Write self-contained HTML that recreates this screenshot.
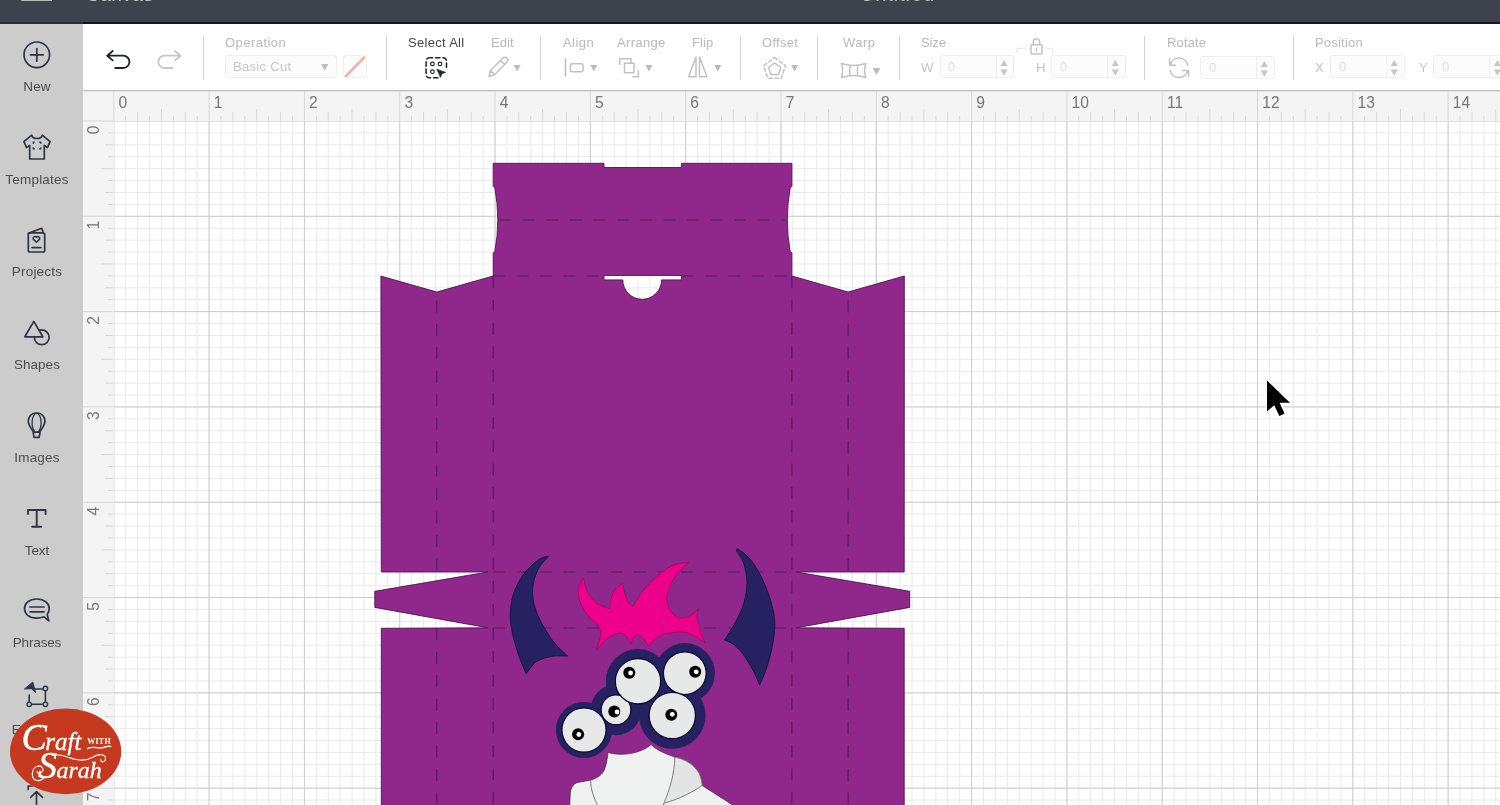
<!DOCTYPE html>
<html lang="en"><head><meta charset="utf-8"><title>Canvas</title>
<style>
html,body{margin:0;padding:0;}
body{width:1500px;height:805px;overflow:hidden;position:relative;background:#fff;font-family:"Liberation Sans",sans-serif;}
#topbar{position:absolute;left:0;top:0;width:1500px;height:23.6px;background:#3e424c;z-index:6;border-bottom:0;box-sizing:border-box;overflow:hidden;}
#topbar:after{content:"";position:absolute;left:0;right:0;bottom:0;height:1.4px;background:linear-gradient(90deg,#2b2e35 0,#2b2e35 83px,#16181c 83px);}
#topbar .ttl{position:absolute;color:#c8c8c8;font-size:19px;letter-spacing:.5px;top:-16.4px;line-height:22px;white-space:nowrap;}
#side{position:absolute;left:0;top:24px;width:83px;height:781px;background:#cccccc;overflow:hidden;}
.sb{position:absolute;left:0;width:74px;text-align:center;font-size:13.5px;color:#4c4c4c;letter-spacing:.2px;}
.sbi{position:absolute;}
#tool{position:absolute;left:83px;top:24px;width:1417px;height:66px;background:#fff;overflow:hidden;}
.lb{position:absolute;top:11px;font-size:13px;color:#b9b9b9;letter-spacing:.45px;white-space:nowrap;line-height:15px;}
.lb.on{color:#444;}
.sep{position:absolute;top:12px;width:1px;height:44px;background:#d3d3d3;}
.box{position:absolute;top:31.2px;height:23.2px;border:1px solid #efefef;border-radius:3px;box-sizing:border-box;background:#fcfcfc;}
.box .v{position:absolute;left:7.5px;top:3.2px;font-size:13px;color:#dfdfdf;line-height:15px;}
.box .sp{position:absolute;right:16.4px;top:0;bottom:0;width:1px;background:#efefef;}
.box .sp:before,.box .sp:after{content:"";position:absolute;left:4.4px;width:7.4px;height:6.2px;background:#c6c6c6;}
.box .sp:before{top:3.8px;clip-path:polygon(0 100%,100% 100%,50% 0);}
.box .sp:after{top:13.2px;clip-path:polygon(0 0,100% 0,50% 100%);}
.dim{position:absolute;top:35.6px;font-size:13.2px;color:#c4c4c4;line-height:15px;}
.dd{position:absolute;width:7.6px;height:7px;background:#bcbcbc;clip-path:polygon(0 0,100% 0,50% 100%);}
.lb,.sb,.dim,.box .v,.ttl{will-change:transform;}
#cv{position:absolute;left:0;top:0;z-index:5;pointer-events:none;will-change:transform;}
</style></head><body>

<svg id="cv" width="1500" height="805" viewBox="0 0 1500 805">
<defs>
<pattern id="gmin" x="113.3" y="120.5" width="11.91375" height="11.91375" patternUnits="userSpaceOnUse"><path d="M0.5 0V11.91375M0 0.5H11.91375" stroke="#e9e9e9" stroke-width="1" fill="none"/></pattern>
<pattern id="gmaj" x="113.3" y="120.5" width="95.31" height="95.31" patternUnits="userSpaceOnUse"><path d="M0.5 0V95.31M0 0.5H95.31" stroke="#cdcdcd" stroke-width="1" fill="none"/></pattern>
</defs>
<rect x="113.3" y="120.5" width="1386.7" height="684.5" fill="#fff"/>
<rect x="113.3" y="120.5" width="1386.7" height="684.5" fill="url(#gmin)"/>
<rect x="113.3" y="120.5" width="1386.7" height="684.5" fill="url(#gmaj)"/>
<rect x="83" y="90" width="1417" height="31" fill="#f4f4f4"/>
<rect x="83" y="90" width="30.8" height="715" fill="#f4f4f4"/>
<rect x="83" y="90" width="1417" height="1.3" fill="#bebebe"/>
<path d="M113.8 91V120.5M125.71 116V120.5M137.63 112V120.5M149.54 116V120.5M161.45 109V120.5M173.37 116V120.5M185.28 112V120.5M197.2 116V120.5M209.11 91V120.5M221.02 116V120.5M232.94 112V120.5M244.85 116V120.5M256.76 109V120.5M268.68 116V120.5M280.59 112V120.5M292.51 116V120.5M304.42 91V120.5M316.33 116V120.5M328.25 112V120.5M340.16 116V120.5M352.07 109V120.5M363.99 116V120.5M375.9 112V120.5M387.82 116V120.5M399.73 91V120.5M411.64 116V120.5M423.56 112V120.5M435.47 116V120.5M447.39 109V120.5M459.3 116V120.5M471.21 112V120.5M483.13 116V120.5M495.04 91V120.5M506.95 116V120.5M518.87 112V120.5M530.78 116V120.5M542.69 109V120.5M554.61 116V120.5M566.52 112V120.5M578.44 116V120.5M590.35 91V120.5M602.26 116V120.5M614.18 112V120.5M626.09 116V120.5M638 109V120.5M649.92 116V120.5M661.83 112V120.5M673.75 116V120.5M685.66 91V120.5M697.57 116V120.5M709.49 112V120.5M721.4 116V120.5M733.31 109V120.5M745.23 116V120.5M757.14 112V120.5M769.06 116V120.5M780.97 91V120.5M792.88 116V120.5M804.8 112V120.5M816.71 116V120.5M828.62 109V120.5M840.54 116V120.5M852.45 112V120.5M864.37 116V120.5M876.28 91V120.5M888.19 116V120.5M900.11 112V120.5M912.02 116V120.5M923.93 109V120.5M935.85 116V120.5M947.76 112V120.5M959.68 116V120.5M971.59 91V120.5M983.5 116V120.5M995.42 112V120.5M1007.33 116V120.5M1019.25 109V120.5M1031.16 116V120.5M1043.07 112V120.5M1054.99 116V120.5M1066.9 91V120.5M1078.81 116V120.5M1090.73 112V120.5M1102.64 116V120.5M1114.56 109V120.5M1126.47 116V120.5M1138.38 112V120.5M1150.3 116V120.5M1162.21 91V120.5M1174.12 116V120.5M1186.04 112V120.5M1197.95 116V120.5M1209.87 109V120.5M1221.78 116V120.5M1233.69 112V120.5M1245.61 116V120.5M1257.52 91V120.5M1269.43 116V120.5M1281.35 112V120.5M1293.26 116V120.5M1305.17 109V120.5M1317.09 116V120.5M1329 112V120.5M1340.92 116V120.5M1352.83 91V120.5M1364.74 116V120.5M1376.66 112V120.5M1388.57 116V120.5M1400.48 109V120.5M1412.4 116V120.5M1424.31 112V120.5M1436.23 116V120.5M1448.14 91V120.5M1460.05 116V120.5M1471.97 112V120.5M1483.88 116V120.5M1495.8 109V120.5M83 121H113.3M108 132.91H113.3M105 144.83H113.3M108 156.74H113.3M101 168.66H113.3M108 180.57H113.3M105 192.48H113.3M108 204.4H113.3M83 216.31H113.3M108 228.22H113.3M105 240.14H113.3M108 252.05H113.3M101 263.97H113.3M108 275.88H113.3M105 287.79H113.3M108 299.71H113.3M83 311.62H113.3M108 323.53H113.3M105 335.45H113.3M108 347.36H113.3M101 359.27H113.3M108 371.19H113.3M105 383.1H113.3M108 395.02H113.3M83 406.93H113.3M108 418.84H113.3M105 430.76H113.3M108 442.67H113.3M101 454.59H113.3M108 466.5H113.3M105 478.41H113.3M108 490.33H113.3M83 502.24H113.3M108 514.15H113.3M105 526.07H113.3M108 537.98H113.3M101 549.89H113.3M108 561.81H113.3M105 573.72H113.3M108 585.64H113.3M83 597.55H113.3M108 609.46H113.3M105 621.38H113.3M108 633.29H113.3M101 645.21H113.3M108 657.12H113.3M105 669.03H113.3M108 680.95H113.3M83 692.86H113.3M108 704.77H113.3M105 716.69H113.3M108 728.6H113.3M101 740.51H113.3M108 752.43H113.3M105 764.34H113.3M108 776.26H113.3M83 788.17H113.3M108 800.08H113.3" stroke="#d6d6d6" stroke-width="1" fill="none"/>
<g font-family="Liberation Sans, sans-serif" font-size="15.6" fill="#767676">
<text x="118.5" y="107.5">0</text>
<text x="213.81" y="107.5">1</text>
<text x="309.12" y="107.5">2</text>
<text x="404.43" y="107.5">3</text>
<text x="499.74" y="107.5">4</text>
<text x="595.05" y="107.5">5</text>
<text x="690.36" y="107.5">6</text>
<text x="785.67" y="107.5">7</text>
<text x="880.98" y="107.5">8</text>
<text x="976.29" y="107.5">9</text>
<text x="1071.6" y="107.5">10</text>
<text x="1166.91" y="107.5">11</text>
<text x="1262.22" y="107.5">12</text>
<text x="1357.53" y="107.5">13</text>
<text x="1452.84" y="107.5">14</text>
<text transform="translate(99.3 125.5) rotate(-90)" text-anchor="end">0</text>
<text transform="translate(99.3 220.81) rotate(-90)" text-anchor="end">1</text>
<text transform="translate(99.3 316.12) rotate(-90)" text-anchor="end">2</text>
<text transform="translate(99.3 411.43) rotate(-90)" text-anchor="end">3</text>
<text transform="translate(99.3 506.74) rotate(-90)" text-anchor="end">4</text>
<text transform="translate(99.3 602.05) rotate(-90)" text-anchor="end">5</text>
<text transform="translate(99.3 697.36) rotate(-90)" text-anchor="end">6</text>
<text transform="translate(99.3 792.67) rotate(-90)" text-anchor="end">7</text>
</g>
<path d="M493.2 163.3 V186.3 L494.9 187.8 Q500.6 220 494.9 251.4 L493.2 252.9 V276 L436.8 292 L380.9 276.1 L381.3 572 H488 L374.8 591.3 V607.4 L488 627.8 L381.3 628.3 V810 H904.2 V628.3 L796.2 627.8 L909.7 607.4 V591.3 L796.2 572 H904.2 L904.3 276 L848.1 292 L791.9 276 V252.9 L790.2 251.4 Q784.5 220 790.2 187.8 L791.9 186.3 V163.3 H681.4 V167.5 H604 V163.3 Z M604 275.4 H681.4 V279.9 H661.6 A19.4 19.4 0 0 1 622.8 279.9 H604 Z" fill="#90288c" fill-rule="evenodd" stroke="#4d1550" stroke-width="0.9" stroke-linejoin="miter"/>
<path d="M499.5 220H786 M493.2 276H604 M681.4 276H792 M493.2 572H792 M493.2 628H792 M493.2 276V810 M791.9 276V810" fill="none" stroke="#571a5c" stroke-width="1.2" stroke-dasharray="12 11.45"/>
<path d="M436.8 292V572 M848.1 292V572" fill="none" stroke="#571a5c" stroke-width="1.2" stroke-dasharray="12 11.45" stroke-dashoffset="15"/>
<path d="M436.8 628.3V810 M848.1 628.3V810" fill="none" stroke="#571a5c" stroke-width="1.2" stroke-dasharray="12 11.45" stroke-dashoffset="0"/>
<path d="M548.7 556.3 C546.8 558.6 541.7 562.8 539.1 567.6 C536.5 572.4 533.9 578.9 533.0 585.0 C532.2 591.1 532.5 597.8 533.9 604.1 C535.4 610.5 538.4 616.9 541.7 623.3 C545.1 629.6 549.6 636.9 553.9 642.4 C558.2 647.8 564.8 653.2 567.5 656.0 C564.4 656.0 557.3 655.4 552.2 656.3 C547.0 657.2 540.9 658.6 536.5 661.5 C532.2 664.4 528.2 671.3 526.1 673.7 C524.7 670.2 521.4 663.3 519.1 656.3 C516.8 649.3 513.6 639.5 512.2 632.0 C510.7 624.4 510.0 618.0 510.4 611.1 C510.9 604.1 512.2 596.9 514.8 590.2 C517.4 583.6 521.9 576.3 526.1 571.1 C530.3 565.9 536.2 561.4 540.0 558.9 C543.8 556.4 547.0 556.8 548.7 556.3 Z" fill="#262262" stroke="#15143f" stroke-width="1" stroke-linejoin="round"/>
<path d="M737.0 548.7 C739.3 550.4 744.7 553.0 748.6 557.3 C752.4 561.7 756.6 568.0 760.1 574.7 C763.7 581.4 767.3 590.1 769.8 597.8 C772.2 605.5 774.1 613.3 774.6 621.0 C775.1 628.7 773.9 636.4 772.7 644.1 C771.4 651.8 769.0 660.4 766.9 667.2 C764.7 674.0 761.2 681.4 759.7 685.0 C758.5 682.2 756.2 676.3 753.4 671.1 C750.5 665.9 746.1 658.2 742.8 653.7 C739.4 649.2 736.2 646.4 733.1 644.1 C730.1 641.8 726.2 640.7 724.5 639.9 C726.6 636.5 731.8 628.9 735.1 622.9 C738.3 616.9 741.7 610.4 743.7 603.6 C745.7 596.9 747.0 589.2 747.0 582.4 C747.0 575.7 745.4 568.3 743.7 563.1 C742.1 558.0 738.1 554.0 737.0 551.6 C735.9 549.2 737.0 549.3 737.0 548.7 Z" fill="#262262" stroke="#15143f" stroke-width="1" stroke-linejoin="round"/>
<path d="M583.0 578.0 C582.0 580.3 578.5 585.2 578.2 589.6 C577.9 594.1 579.1 600.1 580.9 604.6 C582.8 609.2 586.3 613.5 589.1 616.9 C592.0 620.4 596.1 622.2 598.0 625.1 C599.9 628.1 601.1 630.4 600.7 634.7 C600.4 639.0 596.9 647.6 596.0 650.8 C597.9 648.7 602.1 643.0 605.5 640.2 C608.9 637.4 613.3 634.9 616.4 634.0 C619.6 633.1 622.3 633.0 624.6 634.7 C627.0 636.4 629.6 642.3 630.8 644.3 C631.3 642.9 632.4 638.9 633.5 637.4 C634.7 636.0 636.1 635.4 637.6 635.4 C639.1 635.4 640.6 635.6 642.4 637.4 C644.2 639.3 647.3 644.5 648.6 646.3 C650.3 644.5 654.1 639.6 657.4 637.4 C660.7 635.3 664.3 634.2 668.4 633.3 C672.5 632.4 677.9 631.6 682.0 632.0 C686.1 632.3 689.1 633.6 693.0 635.4 C696.8 637.2 702.8 641.4 705.2 642.9 C704.2 640.2 701.1 633.3 699.8 629.2 C698.4 625.1 697.3 621.7 697.0 618.3 C696.8 614.9 698.1 610.7 698.4 608.7 C696.8 610.1 693.4 614.1 690.2 615.6 C687.0 617.1 682.5 618.3 679.3 617.6 C676.1 616.9 673.1 614.3 671.1 611.5 C669.0 608.6 667.4 604.2 667.0 600.5 C666.5 596.9 666.8 593.9 668.4 589.6 C670.0 585.3 673.1 579.1 676.6 574.6 C680.0 570.0 686.4 564.8 688.9 562.3 C685.8 562.8 678.8 563.0 673.8 565.0 C668.8 567.1 663.8 570.5 658.8 574.6 C653.8 578.7 648.1 584.3 643.8 589.6 C639.4 595.0 635.0 603.3 632.8 606.7 C631.7 605.5 628.9 603.2 627.4 600.5 C625.9 597.9 624.8 593.8 624.0 591.0 C623.2 588.1 622.9 585.0 622.6 583.5 C621.1 584.7 617.0 587.0 615.1 589.6 C613.1 592.2 611.9 596.0 611.0 599.2 C610.1 602.4 609.9 606.8 609.6 608.7 C607.2 607.7 601.0 606.0 597.3 603.3 C593.7 600.5 589.9 596.0 587.8 592.3 C585.6 588.7 585.1 583.8 584.3 581.4 C583.5 579.0 583.3 578.7 583.0 578.0 Z" fill="#ec008c" stroke="#9c0f68" stroke-width="1" stroke-linejoin="round"/>
<circle cx="638" cy="681.2" r="32.2" fill="#262262"/>
<circle cx="684.8" cy="673.2" r="30.099999999999998" fill="#262262"/>
<circle cx="616" cy="709.8" r="25.4" fill="#262262"/>
<circle cx="672.3" cy="715.5" r="33.3" fill="#262262"/>
<circle cx="584" cy="730" r="28.1" fill="#262262"/>
<circle cx="616" cy="709.8" r="14.9" fill="#e7e9e9" stroke="#0c0c2c" stroke-width="1.3"/>
<circle cx="584" cy="730" r="22.1" fill="#e7e9e9" stroke="#0c0c2c" stroke-width="1.3"/>
<circle cx="684.8" cy="673.2" r="21.4" fill="#e7e9e9" stroke="#0c0c2c" stroke-width="1.3"/>
<circle cx="638" cy="681.2" r="22.7" fill="#e7e9e9" stroke="#0c0c2c" stroke-width="1.3"/>
<circle cx="672.3" cy="715.5" r="23.2" fill="#e7e9e9" stroke="#0c0c2c" stroke-width="1.3"/>
<circle cx="629.3" cy="672.8" r="6" fill="#000"/><circle cx="630.5999999999999" cy="673.0" r="2.4" fill="#fff"/>
<circle cx="695.2" cy="671.8" r="6" fill="#000"/><circle cx="696.2" cy="671.8" r="2.4" fill="#fff"/>
<circle cx="614.3" cy="711.6" r="6" fill="#000"/><circle cx="617.0999999999999" cy="712.0" r="2.4" fill="#fff"/>
<circle cx="671.3" cy="714.8" r="6" fill="#000"/><circle cx="672.3" cy="714.3" r="2.4" fill="#fff"/>
<circle cx="578.1" cy="734.2" r="6" fill="#000"/><circle cx="578.8000000000001" cy="734.5" r="2.4" fill="#fff"/>
<path d="M569.6 810 L570.2 795 C570.5 788 573 783.5 578 782.4 L591.2 780 C598 778 602.5 774 604.4 769.8 C606.5 764 607.5 758 608 752.4 C622 756.5 640 754 651.2 744.6 C655 749 663 753 675.2 757.2 C686 759 695 766 699.2 773.4 C701 778 701.8 782 702.2 785.4 C712 792 724 799 740 810 Z" fill="#eff0f0" stroke="#3a2a3a" stroke-width="0.7"/>
<path d="M674.8 757.2 C686 759 695 766 699.2 773.4 C701 778 701.8 782 702.2 785.4 C692 792.6 680 798.6 663.8 803.4 C669.5 790 674.6 774 674.8 757.2 Z" fill="#e3e4e4" stroke="#7e7e7e" stroke-width="1"/>
<path d="M590.6 780.4 C590.8 790 594 799 599 808 M663.8 803.4 L662 810" fill="none" stroke="#7e7e7e" stroke-width="1"/>
<path d="M1267 380.6 V411.6 L1274.2 405.2 L1279.4 416 L1284.6 413.4 L1279.6 402.8 H1290 Z" fill="#000" stroke="#fff" stroke-width="2.4" stroke-linejoin="miter" paint-order="stroke"/>
<ellipse cx="65.6" cy="751.4" rx="55.6" ry="42.9" fill="#c5391f"/>
<g fill="#fff" stroke="#fff" stroke-width="0.35" font-family="Liberation Serif, serif" font-style="italic"><text x="21.5" y="750"><tspan font-size="38">C</tspan><tspan font-size="25" dx="-1.5">raft</tspan></text><text x="87.2" y="743.6" font-size="8" font-style="normal" font-weight="bold" stroke="none" letter-spacing="0.25">WITH</text><text x="38" y="778.2"><tspan font-size="38">S</tspan><tspan font-size="24" dx="-0.5">arah</tspan></text></g>
<g fill="none" stroke="#fff" stroke-linecap="round"><path d="M87.6 748.6 C93 745.6 98 748.8 103 747.6 C106.5 746.8 109.5 745 110.8 746.6" stroke-width="1.4"/><path d="M52 755.5 C62 751 78 766 92 757.5 C99 753 106 754 105.5 759 C105.2 762.5 100.5 762.8 100.8 759.6" stroke-width="1.1"/><path d="M44 778 C38 783 32 780.5 32.3 773.5 C32.6 767 40 763.5 42.5 768 C44.5 772 38 775.5 37 771.5" stroke-width="1.1"/><path d="M41 727.5 C33 723 23.5 729 25.5 737.5" stroke-width="1"/></g>
</svg>
<div id="topbar"><svg width="60" height="24" style="position:absolute;left:0;top:0"><rect x="21.3" y="-1" width="30.7" height="1.9" fill="#c4c8c8"/></svg><span class="ttl" style="left:86px;top:-16.2px">Canvas</span><span class="ttl" style="left:860px;font-size:20px;letter-spacing:.9px;top:-17.3px;color:#bdbdbd">Untitled*</span></div>
<div id="side">
<svg class="sbi" width="83" height="781" viewBox="0 24 83 781" style="left:0;top:0" fill="none" stroke="#2e3440" stroke-width="1.7" stroke-linecap="round" stroke-linejoin="round">
<circle cx="36.8" cy="54.8" r="12.8"/><path d="M36.8 48.6V61.2M30.5 54.9H43.1"/>
<path d="M31.7 135.2 L23.9 141.6 L26.6 147.6 L29.7 145.4 V159 H44.3 V145.4 L47.4 147.6 L50.1 141.6 L42.3 135.2 C41 139.6 33 139.6 31.7 135.2 Z"/>
<path d="M33.2 143.5 v-1.3 h1.3 M40.8 143.5 v-1.3 h-1.3 M33.2 147.6 v1.3 h1.3 M40.8 147.6 v1.3 h-1.3" stroke-width="1.2"/>
<path d="M28.4 233.4 L41.8 228.3 L43.2 232.4"/><rect x="28.3" y="232.8" width="16.4" height="19.2" rx="1.8"/>
<path d="M36.4 242.3 L33.2 239.1 A1.9 1.9 0 0 1 36.4 237.2 A1.9 1.9 0 0 1 39.6 239.1 Z" stroke-width="1.5"/><path d="M32 247.6 H41" stroke-width="1.6"/>
<circle cx="41.7" cy="337.3" r="7.4"/><path d="M33.8 321.4 L24.8 336.8 H42.8 Z" fill="#cccccc"/>
<path d="M36.6 413 C30.5 413 28.3 417.5 28.3 421 C28.3 426 32 429 33.6 432.2 H39.6 C41.2 429 44.9 426 44.9 421 C44.9 417.5 42.7 413 36.6 413 Z M33.2 432.6 L34 437.4 H39.2 L40 432.6"/>
<path d="M36.6 413 C31.5 415 30.5 426 34.8 432 M36.6 413 C41.7 415 42.7 426 38.4 432" stroke-width="1.3"/>
<path d="M28 514 V510 H45.6 V514 M36.7 510 V526.5 M32.2 526.7 H41.2" stroke-width="1.9"/>
<path d="M36.8 599 C29 599 24.5 603.4 24.5 608.6 C24.5 613.8 29 618.2 36.8 618.2 C39.6 618.2 42 617.7 44 616.8 L48.8 620.8 L47.2 614.6 C48.6 612.9 49.2 610.9 49.2 608.6 C49.2 603.4 44.6 599 36.8 599 Z"/>
<path d="M30 607 H44 M30 611.8 H44"/>
<path d="M29.2 704.3 H45.4 M45.4 688.5 V704.3 M29.2 704.3 V695" stroke-width="1.6"/>
<circle cx="29.2" cy="704.3" r="2.2" fill="#ccc" stroke-width="1.4"/><circle cx="45.4" cy="704.3" r="2.2" fill="#ccc" stroke-width="1.4"/><circle cx="45.4" cy="688.5" r="2.2" fill="#ccc" stroke-width="1.4"/>
<path d="M24.6 688.8 L32.8 682 L35.6 692.6 L31.8 689 Z" fill="#2e3440" stroke-width="0.9"/><path d="M33 689 H43" stroke-width="1.4"/>
<path d="M36.5 792 V808 M30.7 797.3 L36.5 791.6 L42.5 797.3 M28.2 789.3 V786 H32.6" stroke-width="1.7"/>
</svg>
<div class="sb" style="top:54.7px;line-height:16px">New</div>
<div class="sb" style="top:147.5px;line-height:16px">Templates</div>
<div class="sb" style="top:240.39999999999998px;line-height:16px">Projects</div>
<div class="sb" style="top:333px;line-height:16px;letter-spacing:0.0px">Shapes</div>
<div class="sb" style="top:425.6px;line-height:16px">Images</div>
<div class="sb" style="top:518.5px;line-height:16px;letter-spacing:-0.1px">Text</div>
<div class="sb" style="top:610.6px;line-height:16px;letter-spacing:-0.15px">Phrases</div>
<div class="sb" style="top:697.7px;line-height:16px">Editable</div>
</div>
<div id="tool">
<div class="sep" style="left:119.7px"></div>
<div class="sep" style="left:303.2px"></div>
<div class="sep" style="left:456.5px"></div>
<div class="sep" style="left:657.2px"></div>
<div class="sep" style="left:734.0px"></div>
<div class="sep" style="left:815.8px"></div>
<div class="sep" style="left:1061.3px"></div>
<div class="sep" style="left:1209.8px"></div>
<div class="sep" style="left:1416.5px"></div>
<div class="lb" style="left:142.3px">Operation</div>
<div class="lb on" style="left:325.0px;letter-spacing:0.3px">Select All</div>
<div class="lb" style="left:407.7px;letter-spacing:0.05px">Edit</div>
<div class="lb" style="left:480.3px">Align</div>
<div class="lb" style="left:533.7px;letter-spacing:0.35px">Arrange</div>
<div class="lb" style="left:609.0px;letter-spacing:0.1px">Flip</div>
<div class="lb" style="left:678.5px;letter-spacing:0.3px">Offset</div>
<div class="lb" style="left:760.3px">Warp</div>
<div class="lb" style="left:837.5px;letter-spacing:-0.1px">Size</div>
<div class="lb" style="left:1083.7px;letter-spacing:0.15px">Rotate</div>
<div class="lb" style="left:1231.5px;letter-spacing:0.2px">Position</div>
<div class="box" style="left:142px;width:112px"><span class="v" style="color:#c6c6c6;left:7px;letter-spacing:.3px">Basic Cut</span><div class="dd" style="right:7.5px;top:7.5px"></div></div>
<div class="box" style="left:260px;width:24px"><svg width="24" height="23" style="position:absolute;left:-1px;top:-1px"><path d="M3 21 L21 2.5" stroke="#f0b3a6" stroke-width="2.6" stroke-linecap="round"/></svg></div>
<div class="box" style="left:856.6px;width:74.8px;margin-top:0px"><span class="v">0</span><div class="sp"></div></div>
<div class="box" style="left:968.0px;width:74.6px;margin-top:0px"><span class="v">0</span><div class="sp"></div></div>
<div class="box" style="left:1117.0px;width:74.6px;margin-top:1.1px"><span class="v">0</span><div class="sp"></div></div>
<div class="box" style="left:1247.0px;width:74.5px;margin-top:0px"><span class="v">0</span><div class="sp"></div></div>
<div class="box" style="left:1350.2px;width:74.5px;margin-top:0px"><span class="v">0</span><div class="sp"></div></div>
<div class="dim" style="left:837.5px">W</div>
<div class="dim" style="left:952.5px">H</div>
<div class="dim" style="left:1231.5px">X</div>
<div class="dim" style="left:1335.6px">Y</div>
<div class="dd" style="left:430.3px;top:40.5px"></div>
<div class="dd" style="left:507.0px;top:40.5px"></div>
<div class="dd" style="left:562.2px;top:40.5px"></div>
<div class="dd" style="left:631.0px;top:40.5px"></div>
<div class="dd" style="left:707.8px;top:40.5px"></div>
<div class="dd" style="left:789.7px;top:44.0px"></div>
<svg width="1417" height="66" viewBox="83 24 1417 66" style="position:absolute;left:0;top:0" fill="none" stroke="#c2c2c2" stroke-width="1.5" stroke-linecap="round" stroke-linejoin="round">
<g stroke="#1f2228" stroke-width="1.8"><path d="M112.7 51 L107.2 55.7 L112.7 60.4 M107.8 55.7 H123.3 A6.15 6.15 0 0 1 123.3 68 H115.2"/></g>
<g stroke="#c6c6c6" stroke-width="1.8"><path d="M175 51 L180.5 55.7 L175 60.4 M179.9 55.7 H164.4 A6.15 6.15 0 0 0 164.4 68 H172.5"/></g>
<g stroke="#23262e" stroke-width="1.55"><rect x="426.1" y="57.8" width="20.4" height="20" rx="3.2" stroke-dasharray="4.4 2.9" stroke-dashoffset="1"/><circle cx="432.4" cy="63.9" r="1.8" stroke-width="1.2"/><circle cx="440" cy="63.9" r="1.8" stroke-width="1.2"/><circle cx="432.4" cy="71.7" r="1.8" stroke-width="1.2"/><path d="M446.6 69.6 V75 Q446.6 77.9 443.6 77.9 H440.8" stroke="#fff" stroke-width="3.2"/><path d="M437.2 69.4 L445.6 72.4 L442 73.6 L440.6 77 Z" fill="#23262e" stroke-width="0.8"/></g>
<path d="M489 76.5 L490.5 70.5 L503 58 A2.3 2.3 0 0 1 507 62 L494.5 74.7 Z M500.5 60.5 L504.5 64.5 M490.5 70.5 L494.5 74.7"/>
<path d="M565.5 58.7 V76" stroke-width="1.6"/><rect x="570.5" y="63.7" width="12.5" height="8" rx="1.5"/>
<path d="M619.8 64.5 V58.7 H631 V63 M633 76.8 H638.3 V71" /><rect x="624.5" y="63.2" width="9.5" height="9.5"/>
<path d="M696 57 V76.8 H688.5 Z M699.5 57 V76.8 H707 Z"/>
<path d="M774.7 63 L780.9 67.5 L778.5 74.6 H770.9 L768.5 67.5 Z"/><path d="M774.6 57.6 L785.5 65.6 L781.3 78.3 H767.9 L763.7 65.6 Z" stroke-dasharray="3.3 2.7" stroke-width="1.5"/>
<path d="M841.5 63.5 C849 66 858 66 865.8 63.5 C864.3 68 864.3 73 865.8 77.5 C858 75 849 75 841.5 77.5 C843 73 843 68 841.5 63.5 Z M849.8 65.3 V75.6 M857.5 65.3 V75.6"/>
<rect x="1031" y="44.7" width="11" height="9.3" rx="1.2" stroke-width="1.5"/><path d="M1033.3 44.5 V42 A3.2 3.2 0 0 1 1039.7 42 V44.5 M1036.5 48 V51" stroke-width="1.5"/>
<path d="M1017 53.3 V48.3 H1026 M1047 48.3 H1052.7 V53.3" stroke="#e4e4e4" stroke-width="1"/>
<path d="M1187.8 65.3 A9 9 0 0 0 1170.3 64.6 M1169.6 59 V65.2 H1175.4 M1170.2 70.3 A9 9 0 0 0 1187.7 70.8 M1188.5 76.6 V70.4 H1182.7"/>
</svg>
</div>
</body></html>
